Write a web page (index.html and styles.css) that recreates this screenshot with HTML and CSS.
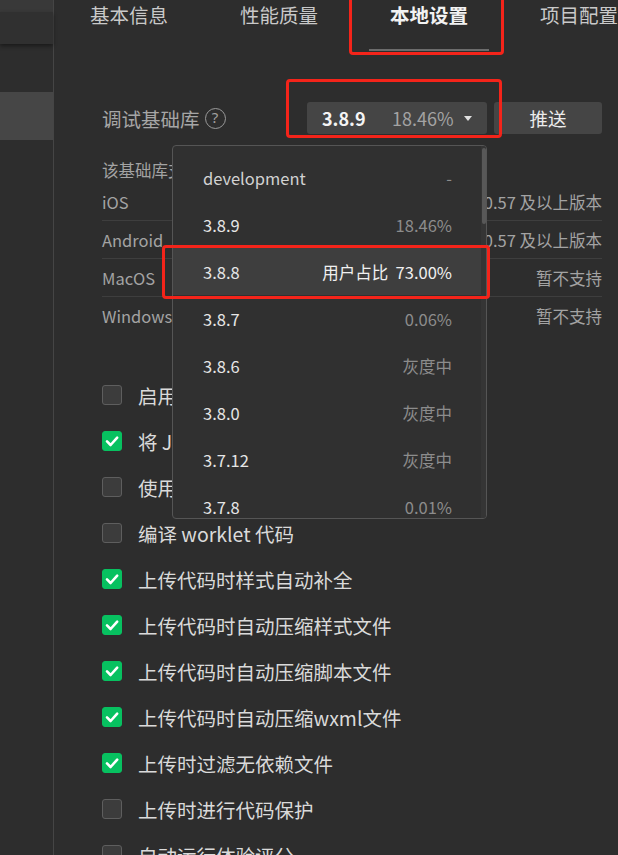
FILE: index.html
```html
<!DOCTYPE html>
<html lang="zh-CN">
<head>
<meta charset="utf-8">
<title>本地设置</title>
<link rel="stylesheet" href="styles.css">
</head>
<body>
<div class="app">
  <aside class="sidebar">
    <div class="sb-top"></div>
    <div class="sb-head"></div>
    <div class="sb-gap"></div>
    <div class="sb-item"></div>
  </aside>
  <main class="main">
    <nav class="tabs">
      <div class="tab"><span class="tab-label">基本信息</span></div>
      <div class="tab"><span class="tab-label">性能质量</span></div>
      <div class="tab active"><span class="tab-label">本地设置</span></div>
      <div class="tab"><span class="tab-label">项目配置</span></div>
    </nav>
    <section class="content">
      <div class="lib-row">
        <div class="lib-label">调试基础库<span class="help">?</span></div>
        <div class="select"><span class="sel-ver">3.8.9</span><span class="sel-pct">18.46%</span><span class="caret"></span></div>
        <div class="push">推送</div>
      </div>
      <div class="support-title">该基础库支持的客户端版本</div>
      <div class="support">
        <div class="srow"><span>iOS</span><span class="sval">8.0.57 及以上版本</span></div>
        <div class="srow"><span>Android</span><span class="sval">8.0.57 及以上版本</span></div>
        <div class="srow"><span>MacOS</span><span class="sval">暂不支持</span></div>
        <div class="srow"><span>Windows</span><span class="sval">暂不支持</span></div>
      </div>
      <div class="options">
        <div class="opt"><span class="cb"></span><span>启用代码自动热重载</span></div>
        <div class="opt"><span class="cb on"><svg viewBox="0 0 20 20"><path d="M5 10.4 L8.6 14 L15.2 6.6"/></svg></span><span>将 JS 编译成 ES5</span></div>
        <div class="opt"><span class="cb"></span><span>使用 npm 模块</span></div>
        <div class="opt"><span class="cb"></span><span>编译 worklet 代码</span></div>
        <div class="opt"><span class="cb on"><svg viewBox="0 0 20 20"><path d="M5 10.4 L8.6 14 L15.2 6.6"/></svg></span><span>上传代码时样式自动补全</span></div>
        <div class="opt"><span class="cb on"><svg viewBox="0 0 20 20"><path d="M5 10.4 L8.6 14 L15.2 6.6"/></svg></span><span>上传代码时自动压缩样式文件</span></div>
        <div class="opt"><span class="cb on"><svg viewBox="0 0 20 20"><path d="M5 10.4 L8.6 14 L15.2 6.6"/></svg></span><span>上传代码时自动压缩脚本文件</span></div>
        <div class="opt"><span class="cb on"><svg viewBox="0 0 20 20"><path d="M5 10.4 L8.6 14 L15.2 6.6"/></svg></span><span>上传代码时自动压缩wxml文件</span></div>
        <div class="opt"><span class="cb on"><svg viewBox="0 0 20 20"><path d="M5 10.4 L8.6 14 L15.2 6.6"/></svg></span><span>上传时过滤无依赖文件</span></div>
        <div class="opt"><span class="cb"></span><span>上传时进行代码保护</span></div>
        <div class="opt"><span class="cb"></span><span>自动运行体验评分</span></div>
      </div>
    </section>
  </main>

  <div class="dropdown">
    <ul class="dd-list">
      <li class="dd-item dev"><span>development</span><span class="dd-val">-</span></li>
      <li class="dd-item"><span>3.8.9</span><span class="dd-val">18.46%</span></li>
      <li class="dd-item hover"><span>3.8.8</span><span class="dd-val">用户占比&nbsp;&nbsp;73.00%</span></li>
      <li class="dd-item"><span>3.8.7</span><span class="dd-val">0.06%</span></li>
      <li class="dd-item"><span>3.8.6</span><span class="dd-val">灰度中</span></li>
      <li class="dd-item"><span>3.8.0</span><span class="dd-val">灰度中</span></li>
      <li class="dd-item"><span>3.7.12</span><span class="dd-val">灰度中</span></li>
      <li class="dd-item"><span>3.7.8</span><span class="dd-val">0.01%</span></li>
      <li class="dd-item"><span>3.7.7</span><span class="dd-val">0.02%</span></li>
    </ul>
    <div class="dd-scroll"><div class="dd-thumb"></div></div>
  </div>

  <div class="mark mark-tab"></div>
  <div class="mark mark-select"></div>
  <div class="mark mark-item"></div>
</div>
</body>
</html>
```

FILE: styles.css
```css
* { box-sizing: border-box; }
html, body {
  margin: 0;
  padding: 0;
  background: #2d2d2d;
}
body {
  width: 618px;
  height: 855px;
  overflow: hidden;
  font-family: "Noto Sans CJK SC", "Noto Sans", sans-serif;
  color: #d8d8d8;
}
.app {
  position: relative;
  display: flex;
  width: 618px;
  height: 855px;
  overflow: hidden;
}

/* sidebar */
.sidebar {
  width: 54px;
  flex: none;
  border-right: 1px solid #454545;
  background: #2d2d2d;
  display: flex;
  flex-direction: column;
}
.sb-top { height: 12px; background: #393939; }
.sb-head {
  height: 32px;
  background: #303030;
  box-shadow: 0 2px 4px rgba(0,0,0,0.45);
  position: relative;
  z-index: 1;
}
.sb-gap { height: 48px; }
.sb-item { height: 48px; background: #464646; }

/* main */
.main {
  flex: 1;
  min-width: 0;
  overflow: hidden;
}
.tabs {
  display: flex;
  height: 51px;
}
.tab {
  width: 150px;
  flex: none;
  display: flex;
  justify-content: center;
}
.tab-label {
  display: block;
  width: 120px;
  text-align: center;
  font-size: 19.5px;
  line-height: 30px;
  height: 51px;
  padding-bottom: 19px;
  color: #c9c9c9;
  white-space: nowrap;
}
.tab.active .tab-label {
  color: #f2f2f2;
  font-weight: 700;
  border-bottom: 2px solid #6c6c6c;
}

.content {
  padding: 51px 16px 0 48px;
}

/* lib row */
.lib-row {
  display: flex;
  height: 32px;
  align-items: center;
}
.lib-label {
  width: 205px;
  flex: none;
  display: flex;
  align-items: center;
  gap: 5px;
  font-size: 19.5px;
  color: #a6a6a6;
  white-space: nowrap;
}
.help {
  width: 21px;
  height: 21px;
  border: 1.5px solid #9a9a9a;
  border-radius: 50%;
  font-size: 15px;
  line-height: 17px;
  text-align: center;
  color: #a0a0a0;
  font-family: "Noto Sans", sans-serif;
}
.select {
  width: 180px;
  height: 32px;
  flex: none;
  background: #454545;
  border-radius: 3px;
  display: flex;
  align-items: center;
  padding: 0 15px;
  font-size: 18px;
}
.sel-ver {
  font-weight: 700;
  color: #f4f4f4;
  width: 70px;
}
.sel-pct {
  color: #a3a3a3;
  flex: 1;
}
.caret {
  width: 0;
  height: 0;
  border-left: 4.5px solid transparent;
  border-right: 4.5px solid transparent;
  border-top: 5px solid #e0e0e0;
  margin-left: 6px;
}
.push {
  width: 108px;
  height: 32px;
  margin-left: 7px;
  flex: none;
  background: #454545;
  border-radius: 3px;
  display: flex;
  align-items: center;
  justify-content: center;
  font-size: 18.5px;
  color: #ececec;
}

/* support table */
.support-title {
  margin-top: 23px;
  height: 26px;
  line-height: 26px;
  font-size: 16.5px;
  color: #a3a3a3;
  white-space: nowrap;
}
.support {
  font-size: 16.5px;
  color: #a3a3a3;
}
.srow {
  height: 38px;
  display: flex;
  align-items: center;
  justify-content: space-between;
  border-bottom: 1px solid #3e3e3e;
}
.srow:last-child { border-bottom: none; }

/* options */
.options {
  margin-top: 37px;
}
.opt {
  height: 46px;
  display: flex;
  align-items: center;
  gap: 16px;
  font-size: 19.5px;
  color: #dadada;
  white-space: nowrap;
}
.cb {
  width: 20px;
  height: 20px;
  flex: none;
  border-radius: 3px;
  background: #3c3c3c;
  border: 1px solid #5e5e5e;
  display: flex;
  align-items: center;
  justify-content: center;
}
.cb.on {
  background: #07c160;
  border-color: #07c160;
}
.cb svg {
  width: 20px;
  height: 20px;
  flex: none;
}
.cb svg path {
  fill: none;
  stroke: #ffffff;
  stroke-width: 2.6;
  stroke-linecap: round;
  stroke-linejoin: round;
}

/* dropdown overlay */
.dropdown {
  position: absolute;
  left: 172px;
  top: 145px;
  width: 315px;
  height: 374px;
  background: #303030;
  border: 1px solid #555555;
  border-radius: 4px;
  display: flex;
  overflow: hidden;
  z-index: 5;
}
.dd-list {
  list-style: none;
  margin: 0;
  padding: 8px 0 0 0;
  flex: 1;
  overflow: hidden;
}
.dd-item {
  height: 47px;
  display: flex;
  align-items: center;
  justify-content: space-between;
  padding: 0 29px 0 30px;
  font-size: 16.5px;
  color: #e6e6e6;
  white-space: nowrap;
}
.dd-item.dev { color: #d2d2d2; }
.dd-val { color: #8c8c8c; }
.dd-item.hover { background: #3e3e3e; }
.dd-item.hover .dd-val { color: #f0f0f0; }
.dd-scroll {
  width: 5px;
  flex: none;
  background: #353535;
  position: relative;
}
.dd-thumb {
  position: absolute;
  top: 2px;
  right: 0;
  width: 4px;
  height: 76px;
  border-radius: 2px;
  background: #585858;
}

/* red annotation boxes */
.mark {
  position: absolute;
  border: 3px solid #f4241a;
  border-radius: 4px;
  z-index: 10;
  pointer-events: none;
}
.mark-tab {
  left: 349px;
  top: -10px;
  width: 155px;
  height: 65px;
}
.mark-select {
  left: 286px;
  top: 79px;
  width: 216px;
  height: 59px;
}
.mark-item {
  left: 162px;
  top: 245px;
  width: 328px;
  height: 54px;
}
```
